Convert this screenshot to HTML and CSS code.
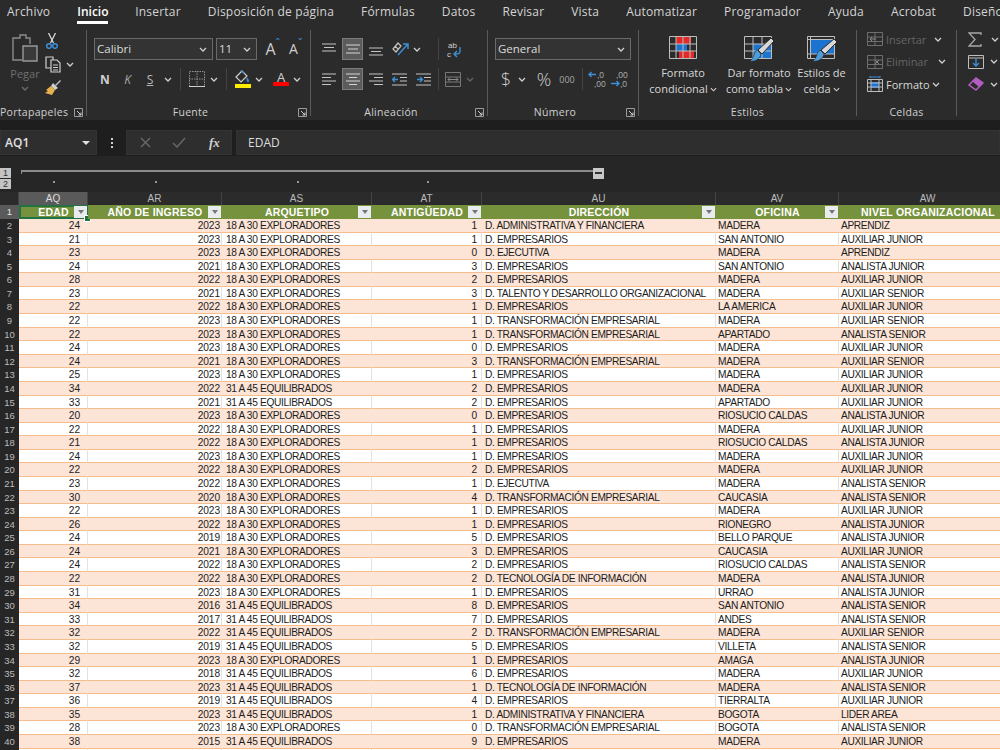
FILE: index.html
```html
<!DOCTYPE html>
<html lang="es">
<head>
<meta charset="utf-8">
<title>Excel</title>
<link rel="stylesheet" href="styles.css">
</head>
<body>
<svg class="defs" width="0" height="0">
  <symbol id="chev" viewBox="0 0 8 5"><path d="M1 1l3 3 3-3" fill="none" stroke="#cfcfcf" stroke-width="1.3"/></symbol>
  <symbol id="launch" viewBox="0 0 9 9"><path d="M.5 8.5V.5h8v8z" fill="none" stroke="#9a9a9a"/><path d="M3 3l4 4M7 4.5V7H4.5" fill="none" stroke="#d0d0d0"/></symbol>
</svg>
<nav class="tabs">
  <span>Archivo</span><span class="on">Inicio</span><span>Insertar</span><span>Disposición de página</span><span>Fórmulas</span><span>Datos</span><span>Revisar</span><span>Vista</span><span>Automatizar</span><span>Programador</span><span>Ayuda</span><span>Acrobat</span><span>Diseño</span>
</nav>
<section class="ribbon">
  <div class="group g-clip">
    <div class="body clip">
      <div class="paste">
        <svg width="28" height="31" viewBox="0 0 28 31"><path d="M5 5h4V2h6v3h4v6M11 27H2V5h3" fill="none" stroke="#8c8c8c" stroke-width="1.400"/><path d="M12 13h14v15H12z" fill="#3a3a3a" stroke="#999" stroke-width="1.400"/></svg>
        <span class="pg">Pegar</span>
        <svg class="c" width="8" height="5"><use href="#chev"/></svg>
      </div>
      <div class="clip-side">
        <svg width="14" height="16" viewBox="0 0 14 16"><path d="M3.500 0l5 10M10.500 0l-5 10" stroke="#d8d8d8" stroke-width="1.300"/><circle cx="4" cy="13" r="2.300" fill="none" stroke="#3d8fd6" stroke-width="1.500"/><circle cx="10" cy="13" r="2.300" fill="none" stroke="#3d8fd6" stroke-width="1.500"/></svg>
        <div class="line">
          <svg width="16" height="17" viewBox="0 0 16 17"><path d="M6 12H1V1h7v3" fill="none" stroke="#cfcfcf" stroke-width="1.200"/><path d="M6 4h6l3 3v9H6z" fill="#2b2b2b" stroke="#cfcfcf" stroke-width="1.200"/><path d="M8 9h5M8 11.500h5M8 14h5" stroke="#cfcfcf"/></svg>
          <svg class="c" width="8" height="5"><use href="#chev"/></svg>
        </div>
        <svg width="16" height="16" viewBox="0 0 16 16"><path d="M10 5l5-5 1 1-5 5z" fill="#bdbdbd"/><path d="M8 3l5 5-3 2-4-4z" fill="#cfcfcf"/><path d="M6 6l4 4-3 5-7-2 3-2-2-1z" fill="#e7b24c"/></svg>
      </div>
    </div>
    <div class="foot start">Portapapeles<svg class="launch" width="9" height="9"><use href="#launch"/></svg></div>
  </div>

  <div class="group g-font">
    <div class="body stack">
      <div class="row">
        <div class="sel w119"><span class="val">Calibri</span><svg width="8" height="5"><use href="#chev"/></svg></div>
        <div class="sel w41"><span class="val">11</span><svg width="8" height="5"><use href="#chev"/></svg></div>
        <span class="bigA w25">A<sup class="up">ˆ</sup></span>
        <span class="bigA small w25">A<sup class="dn">ˇ</sup></span>
      </div>
      <div class="row">
        <span class="b w22 fb">N</span><span class="b w23 fi">K</span><span class="b w22 fu">S</span>
        <span class="b w14"><svg width="8" height="5"><use href="#chev"/></svg></span>
        <i class="sep m5"></i>
        <span class="b w21"><svg width="16" height="16" viewBox="0 0 16 16"><path d="M.5.500h15v15H.5z" fill="none" stroke="#8f8f8f" stroke-dasharray="1.500 1"/><path d="M8 0v16M0 8h16" stroke="#8f8f8f" stroke-dasharray="1.500 1"/><path d="M0 15.500h16" stroke="#d0d0d0"/></svg></span>
        <span class="b w14"><svg width="8" height="5"><use href="#chev"/></svg></span>
        <i class="sep m5"></i>
        <span class="b w21"><svg width="16" height="18" viewBox="0 0 16 18"><path d="M7 1L1 7l5 5 6-6z" fill="none" stroke="#d0d0d0" stroke-width="1.200"/><path d="M12 8c2 2 2 4 1 4s-1-2-1-4zM5 1l5 2" fill="#3d8fd6" stroke="#3d8fd6"/><rect y="14" width="16" height="4" fill="#ffeb00"/></svg></span>
        <span class="b w12"><svg width="8" height="5"><use href="#chev"/></svg></span>
        <span class="b w24 m4l fcol">A</span>
        <span class="b w8"><svg width="8" height="5"><use href="#chev"/></svg></span>
      </div>
    </div>
    <div class="foot pr16">Fuente<svg class="launch" width="9" height="9"><use href="#launch"/></svg></div>
  </div>

  <div class="group g-align">
    <div class="body stack">
      <div class="row">
        <span class="b w22"><svg width="14" height="12" viewBox="0 0 14 12"><path d="M0 1h14M2 4.500h10M0 8h14" stroke="#c4c4c4" stroke-width="1.200"/></svg></span>
        <span class="b w21 act m2l"><svg width="14" height="12" viewBox="0 0 14 12"><path d="M0 2h14M2 6h10M0 10h14" stroke="#d4d4d4" stroke-width="1.200"/></svg></span>
        <span class="b w22 m2l"><svg width="14" height="14" viewBox="0 0 14 14"><path d="M0 6h14M2 9.500h10M0 13h14" stroke="#c4c4c4" stroke-width="1.200"/></svg></span>
        <span class="b w23 m2l"><svg width="17" height="16" viewBox="0 0 17 16"><path d="M1 8l5-6 3 3-5 6zM3 5l3 3" fill="none" stroke="#c4c4c4" stroke-width="1.200"/><path d="M6 14L15 4M11 3h5v5" fill="none" stroke="#3d8fd6" stroke-width="1.500"/></svg></span>
        <span class="b w10"><svg width="8" height="5"><use href="#chev"/></svg></span>
        <i class="sep m16l m7r"></i>
        <span class="b w16"><svg width="16" height="19" viewBox="0 0 16 19"><text class="ab" x="2" y="7.500">ab</text><text class="ab" x="1" y="16.500">c</text><path d="M14 7v4c0 3-2 3-5 3M11 11l-3 3 3 3" fill="none" stroke="#3d8fd6" stroke-width="1.400"/></svg></span>
      </div>
      <div class="row">
        <span class="b w22"><svg width="14" height="13" viewBox="0 0 14 13"><path d="M0 1h14M0 4.500h9M0 8h14M0 11.500h9" stroke="#c4c4c4" stroke-width="1.200"/></svg></span>
        <span class="b w21 act m2l"><svg width="14" height="13" viewBox="0 0 14 13"><path d="M0 1h14M3 4.500h8M0 8h14M3 11.500h8" stroke="#d4d4d4" stroke-width="1.200"/></svg></span>
        <span class="b w22 m2l"><svg width="14" height="13" viewBox="0 0 14 13"><path d="M0 1h14M5 4.500h9M0 8h14M5 11.500h9" stroke="#c4c4c4" stroke-width="1.200"/></svg></span>
        <span class="b w22 m1l"><svg width="15" height="13" viewBox="0 0 15 13"><path d="M0 1h15M0 12h15M8 4.500h7M8 8h7" stroke="#c4c4c4" stroke-width="1.200"/><path d="M6 6.500H1M3 4L.5 6.500 3 9" fill="none" stroke="#3d8fd6" stroke-width="1.400"/></svg></span>
        <span class="b w22 m2l"><svg width="15" height="13" viewBox="0 0 15 13"><path d="M0 1h15M0 12h15M8 4.500h7M8 8h7" stroke="#c4c4c4" stroke-width="1.200"/><path d="M1 6.500h5M4 4l2.500 2.500L4 9" fill="none" stroke="#3d8fd6" stroke-width="1.400"/></svg></span>
        <i class="sep m4l m5r"></i>
        <span class="b w18"><svg width="16" height="15" viewBox="0 0 16 15"><path d="M.5.500h15v14H.5zM0 5h16M0 10h16" fill="none" stroke="#777"/><path d="M3 7.500h10M5 5.500l-2 2 2 2M11 5.500l2 2-2 2" fill="none" stroke="#8a8a8a"/></svg></span>
        <span class="b w16 dim"><svg width="8" height="5"><use href="#chev"/></svg></span>
      </div>
    </div>
    <div class="foot pr16">Alineación<svg class="launch" width="9" height="9"><use href="#launch"/></svg></div>
  </div>

  <div class="group g-num">
    <div class="body stack">
      <div class="row"><div class="sel w136"><span class="val">General</span><svg width="8" height="5"><use href="#chev"/></svg></div></div>
      <div class="row">
        <span class="b w22 cur">$</span>
        <span class="b w10"><svg width="8" height="5"><use href="#chev"/></svg></span>
        <span class="b w22 m6l pct">%</span>
        <span class="b w24 th">000</span>
        <i class="sep m3l m4r"></i>
        <span class="b w20"><svg width="18" height="18" viewBox="0 0 18 18"><text class="dec" x="9" y="7.500">,0</text><text class="dec" x="6" y="17">,00</text><path d="M8 4.500H1M3.500 2L1 4.500 3.500 7" fill="none" stroke="#3d8fd6" stroke-width="1.400"/></svg></span>
        <span class="b w20 m3l"><svg width="18" height="18" viewBox="0 0 18 18"><text class="dec" x="5" y="7.500">,00</text><text class="dec" x="9" y="17">,0</text><path d="M0 13.500h8M5.500 11L8 13.500 5.500 16" fill="none" stroke="#3d8fd6" stroke-width="1.400"/></svg></span>
      </div>
    </div>
    <div class="foot pr16">Número<svg class="launch" width="9" height="9"><use href="#launch"/></svg></div>
  </div>

  <div class="group g-sty">
    <div class="body big-row">
      <div class="big w70 m9l">
        <svg width="28" height="26" viewBox="0 0 28 26"><path d="M7 1h15v7H7zM10 15h15v7H10z" fill="#e32a2a"/><path d="M7 8h11v7H7z" fill="#1b74d0"/><path d="M.5.500h27v22H.5zM0 8h28M0 15h28M7 0v23M14 0v23M21 0v23" fill="none" stroke="#bdbdbd"/></svg>
        <span class="cap">Formato</span>
        <span class="cap">condicional <svg width="7" height="5"><use href="#chev"/></svg></span>
      </div>
      <div class="big w72 m5l">
        <svg width="30" height="26" viewBox="0 0 30 26"><path d="M9 8h19v15H9z" fill="#1b74d0"/><path d="M.5.500h27v22H.5zM0 8h28M0 15h28M9 0v23M18 0v23" fill="none" stroke="#bdbdbd"/><path d="M27 2l3 3-12 13-4-4z" fill="#d8d8d8" stroke="#2b2b2b"/><path d="M13 14l4 4c-1 5-6 8-11 7 4-2 3-8 7-11z" fill="#4b9ddc" stroke="#2b2b2b" stroke-width=".6"/></svg>
        <span class="cap">Dar formato</span>
        <span class="cap">como tabla <svg width="7" height="5"><use href="#chev"/></svg></span>
      </div>
      <div class="big w53">
        <svg width="30" height="26" viewBox="0 0 30 26"><path d="M4 4h24v14H4z" fill="#1b74d0"/><path d="M.5.500h27v22H.5zM3.500 0v23M0 3.500h28M0 18h28" fill="none" stroke="#bdbdbd"/><path d="M27 3l3 3-12 12-4-4z" fill="#d8d8d8" stroke="#2b2b2b"/><path d="M13 14l4 4c-1 5-6 8-11 7 4-2 3-8 7-11z" fill="#4b9ddc" stroke="#2b2b2b" stroke-width=".6"/></svg>
        <span class="cap">Estilos de</span>
        <span class="cap">celda <svg width="7" height="5"><use href="#chev"/></svg></span>
      </div>
    </div>
    <div class="foot">Estilos</div>
  </div>

  <div class="group g-cel">
    <div class="body lines">
      <div class="ln dimt"><svg width="16" height="14" viewBox="0 0 16 14"><path d="M.5.500h15v13H.5zM0 5h16M0 9.500h16M8 0v14" fill="none" stroke="#6e6e6e"/><path d="M9 7H3M5 5L3 7l2 2" fill="none" stroke="#8a8a8a"/></svg><span>Insertar</span><svg class="c1" width="8" height="5"><use href="#chev"/></svg></div>
      <div class="ln dimt"><svg width="16" height="14" viewBox="0 0 16 14"><path d="M.5.500h15v13H.5zM0 5h16M0 9.500h16M8 0v14" fill="none" stroke="#6e6e6e"/><path d="M8 5l4 4M12 5L8 9" stroke="#8a8a8a"/></svg><span>Eliminar</span><svg class="c2" width="8" height="5"><use href="#chev"/></svg></div>
      <div class="ln"><svg width="16" height="16" viewBox="0 0 16 16"><path d="M4 6h8v6H4z" fill="#1b74d0"/><path d="M.5 3.500h15v12H.5zM0 7h16M0 11h16M4 3v13M12 3v13" fill="none" stroke="#bdbdbd"/><path d="M3 1h10M3 0v2M13 0v2" stroke="#3d8fd6"/></svg><span>Formato</span><svg class="c3" width="8" height="5"><use href="#chev"/></svg></div>
    </div>
    <div class="foot">Celdas</div>
  </div>

  <div class="group g-edit">
    <div class="body lines">
      <div class="ln"><svg width="14" height="15" viewBox="0 0 14 15"><path d="M13 3V1H1l6 6.500L1 14h12v-2" fill="none" stroke="#a8a8a8" stroke-width="1.300"/></svg><svg class="e1" width="8" height="5"><use href="#chev"/></svg></div>
      <div class="ln"><svg width="16" height="14" viewBox="0 0 16 14"><path d="M.5.500h15v13H.5z" fill="none" stroke="#bdbdbd"/><path d="M0 3h16" stroke="#bdbdbd"/><path d="M8 4v7M5 8l3 3 3-3" fill="none" stroke="#3d8fd6" stroke-width="1.400"/></svg><svg class="e2" width="8" height="5"><use href="#chev"/></svg></div>
      <div class="ln"><svg width="16" height="14" viewBox="0 0 16 14"><path d="M1 8l7-7 7 5-7 7z" fill="none" stroke="#b35cc4" stroke-width="1.500"/><path d="M8 1l7 5-4 4-7-6z" fill="#b35cc4"/></svg><svg class="e2" width="8" height="5"><use href="#chev"/></svg></div>
    </div>
  </div>
</section>
<div class="gap"></div>
<section class="fbar">
  <div class="name"><span>AQ1</span><i class="tri"></i></div>
  <div class="dots"><i></i><i></i><i></i></div>
  <div class="fx">
    <svg width="11" height="11" viewBox="0 0 11 11"><path d="M1 1l9 9M10 1l-9 9" stroke="#6a6a6a" stroke-width="1.400"/></svg>
    <svg width="14" height="11" viewBox="0 0 14 11"><path d="M1 6l4 4 8-9" fill="none" stroke="#6a6a6a" stroke-width="1.400"/></svg>
    <em>fx</em>
  </div>
  <div class="input">EDAD</div>
</section>
<section class="outline">
  <div class="lv"><span>1</span><span>2</span></div>
  <div class="track">
    <div class="bar"><i class="rule"></i><b class="minus"></b></div>
    <div class="pts"><i class="p1"></i><i class="p2"></i><i class="p3"></i><i class="p4"></i></div>
  </div>
</section>
<table class="sheet">
<thead>
<tr class="cols"><th class="corner"></th><th class="s">AQ</th><th>AR</th><th>AS</th><th>AT</th><th>AU</th><th>AV</th><th>AW</th></tr>
</thead>
<tbody>
<tr class="head"><th class="s">1</th><th class="cur-cell">EDAD<i class="f"></i></th><th>AÑO DE INGRESO<i class="f"></i></th><th>ARQUETIPO<i class="f"></i></th><th>ANTIGÜEDAD<i class="f"></i></th><th>DIRECCIÓN<i class="f"></i></th><th>OFICINA<i class="f"></i></th><th>NIVEL ORGANIZACIONAL<i class="f"></i></th></tr>
<tr><th>2</th><td>24</td><td>2023</td><td>18 A 30 EXPLORADORES</td><td>1</td><td>D. ADMINISTRATIVA Y FINANCIERA</td><td>MADERA</td><td>APRENDIZ</td></tr>
<tr><th>3</th><td>21</td><td>2023</td><td>18 A 30 EXPLORADORES</td><td>1</td><td>D. EMPRESARIOS</td><td>SAN ANTONIO</td><td>AUXILIAR JUNIOR</td></tr>
<tr><th>4</th><td>23</td><td>2023</td><td>18 A 30 EXPLORADORES</td><td>0</td><td>D. EJECUTIVA</td><td>MADERA</td><td>APRENDIZ</td></tr>
<tr><th>5</th><td>24</td><td>2021</td><td>18 A 30 EXPLORADORES</td><td>3</td><td>D. EMPRESARIOS</td><td>SAN ANTONIO</td><td>ANALISTA JUNIOR</td></tr>
<tr><th>6</th><td>28</td><td>2022</td><td>18 A 30 EXPLORADORES</td><td>2</td><td>D. EMPRESARIOS</td><td>MADERA</td><td>AUXILIAR JUNIOR</td></tr>
<tr><th>7</th><td>23</td><td>2021</td><td>18 A 30 EXPLORADORES</td><td>3</td><td>D. TALENTO Y DESARROLLO ORGANIZACIONAL</td><td>MADERA</td><td>AUXILIAR SENIOR</td></tr>
<tr><th>8</th><td>22</td><td>2022</td><td>18 A 30 EXPLORADORES</td><td>1</td><td>D. EMPRESARIOS</td><td>LA AMERICA</td><td>AUXILIAR JUNIOR</td></tr>
<tr><th>9</th><td>22</td><td>2023</td><td>18 A 30 EXPLORADORES</td><td>1</td><td>D. TRANSFORMACIÓN EMPRESARIAL</td><td>MADERA</td><td>AUXILIAR SENIOR</td></tr>
<tr><th>10</th><td>22</td><td>2023</td><td>18 A 30 EXPLORADORES</td><td>1</td><td>D. TRANSFORMACIÓN EMPRESARIAL</td><td>APARTADO</td><td>ANALISTA SENIOR</td></tr>
<tr><th>11</th><td>24</td><td>2023</td><td>18 A 30 EXPLORADORES</td><td>0</td><td>D. EMPRESARIOS</td><td>MADERA</td><td>AUXILIAR JUNIOR</td></tr>
<tr><th>12</th><td>24</td><td>2021</td><td>18 A 30 EXPLORADORES</td><td>3</td><td>D. TRANSFORMACIÓN EMPRESARIAL</td><td>MADERA</td><td>AUXILIAR SENIOR</td></tr>
<tr><th>13</th><td>25</td><td>2023</td><td>18 A 30 EXPLORADORES</td><td>1</td><td>D. EMPRESARIOS</td><td>MADERA</td><td>AUXILIAR JUNIOR</td></tr>
<tr><th>14</th><td>34</td><td>2022</td><td>31 A 45 EQUILIBRADOS</td><td>2</td><td>D. EMPRESARIOS</td><td>MADERA</td><td>AUXILIAR JUNIOR</td></tr>
<tr><th>15</th><td>33</td><td>2021</td><td>31 A 45 EQUILIBRADOS</td><td>2</td><td>D. EMPRESARIOS</td><td>APARTADO</td><td>AUXILIAR JUNIOR</td></tr>
<tr><th>16</th><td>20</td><td>2023</td><td>18 A 30 EXPLORADORES</td><td>0</td><td>D. EMPRESARIOS</td><td>RIOSUCIO CALDAS</td><td>ANALISTA JUNIOR</td></tr>
<tr><th>17</th><td>22</td><td>2022</td><td>18 A 30 EXPLORADORES</td><td>1</td><td>D. EMPRESARIOS</td><td>MADERA</td><td>AUXILIAR JUNIOR</td></tr>
<tr><th>18</th><td>21</td><td>2022</td><td>18 A 30 EXPLORADORES</td><td>1</td><td>D. EMPRESARIOS</td><td>RIOSUCIO CALDAS</td><td>ANALISTA JUNIOR</td></tr>
<tr><th>19</th><td>24</td><td>2023</td><td>18 A 30 EXPLORADORES</td><td>1</td><td>D. EMPRESARIOS</td><td>MADERA</td><td>AUXILIAR JUNIOR</td></tr>
<tr><th>20</th><td>22</td><td>2022</td><td>18 A 30 EXPLORADORES</td><td>2</td><td>D. EMPRESARIOS</td><td>MADERA</td><td>AUXILIAR JUNIOR</td></tr>
<tr><th>21</th><td>23</td><td>2022</td><td>18 A 30 EXPLORADORES</td><td>1</td><td>D. EJECUTIVA</td><td>MADERA</td><td>ANALISTA SENIOR</td></tr>
<tr><th>22</th><td>30</td><td>2020</td><td>18 A 30 EXPLORADORES</td><td>4</td><td>D. TRANSFORMACIÓN EMPRESARIAL</td><td>CAUCASIA</td><td>ANALISTA SENIOR</td></tr>
<tr><th>23</th><td>22</td><td>2023</td><td>18 A 30 EXPLORADORES</td><td>1</td><td>D. EMPRESARIOS</td><td>MADERA</td><td>AUXILIAR JUNIOR</td></tr>
<tr><th>24</th><td>26</td><td>2022</td><td>18 A 30 EXPLORADORES</td><td>1</td><td>D. EMPRESARIOS</td><td>RIONEGRO</td><td>ANALISTA JUNIOR</td></tr>
<tr><th>25</th><td>24</td><td>2019</td><td>18 A 30 EXPLORADORES</td><td>5</td><td>D. EMPRESARIOS</td><td>BELLO PARQUE</td><td>ANALISTA JUNIOR</td></tr>
<tr><th>26</th><td>24</td><td>2021</td><td>18 A 30 EXPLORADORES</td><td>3</td><td>D. EMPRESARIOS</td><td>CAUCASIA</td><td>AUXILIAR JUNIOR</td></tr>
<tr><th>27</th><td>24</td><td>2022</td><td>18 A 30 EXPLORADORES</td><td>2</td><td>D. EMPRESARIOS</td><td>RIOSUCIO CALDAS</td><td>ANALISTA SENIOR</td></tr>
<tr><th>28</th><td>22</td><td>2022</td><td>18 A 30 EXPLORADORES</td><td>2</td><td>D. TECNOLOGÍA DE INFORMACIÓN</td><td>MADERA</td><td>ANALISTA JUNIOR</td></tr>
<tr><th>29</th><td>31</td><td>2023</td><td>18 A 30 EXPLORADORES</td><td>1</td><td>D. EMPRESARIOS</td><td>URRAO</td><td>ANALISTA JUNIOR</td></tr>
<tr><th>30</th><td>34</td><td>2016</td><td>31 A 45 EQUILIBRADOS</td><td>8</td><td>D. EMPRESARIOS</td><td>SAN ANTONIO</td><td>ANALISTA SENIOR</td></tr>
<tr><th>31</th><td>33</td><td>2017</td><td>31 A 45 EQUILIBRADOS</td><td>7</td><td>D. EMPRESARIOS</td><td>ANDES</td><td>ANALISTA SENIOR</td></tr>
<tr><th>32</th><td>32</td><td>2022</td><td>31 A 45 EQUILIBRADOS</td><td>2</td><td>D. TRANSFORMACIÓN EMPRESARIAL</td><td>MADERA</td><td>AUXILIAR SENIOR</td></tr>
<tr><th>33</th><td>32</td><td>2019</td><td>31 A 45 EQUILIBRADOS</td><td>5</td><td>D. EMPRESARIOS</td><td>VILLETA</td><td>ANALISTA SENIOR</td></tr>
<tr><th>34</th><td>29</td><td>2023</td><td>18 A 30 EXPLORADORES</td><td>1</td><td>D. EMPRESARIOS</td><td>AMAGA</td><td>ANALISTA JUNIOR</td></tr>
<tr><th>35</th><td>32</td><td>2018</td><td>31 A 45 EQUILIBRADOS</td><td>6</td><td>D. EMPRESARIOS</td><td>MADERA</td><td>AUXILIAR JUNIOR</td></tr>
<tr><th>36</th><td>37</td><td>2023</td><td>31 A 45 EQUILIBRADOS</td><td>1</td><td>D. TECNOLOGÍA DE INFORMACIÓN</td><td>MADERA</td><td>ANALISTA SENIOR</td></tr>
<tr><th>37</th><td>36</td><td>2019</td><td>31 A 45 EQUILIBRADOS</td><td>4</td><td>D. EMPRESARIOS</td><td>TIERRALTA</td><td>AUXILIAR JUNIOR</td></tr>
<tr><th>38</th><td>35</td><td>2023</td><td>31 A 45 EQUILIBRADOS</td><td>1</td><td>D. ADMINISTRATIVA Y FINANCIERA</td><td>BOGOTA</td><td>LIDER AREA</td></tr>
<tr><th>39</th><td>28</td><td>2023</td><td>18 A 30 EXPLORADORES</td><td>0</td><td>D. TRANSFORMACIÓN EMPRESARIAL</td><td>BOGOTA</td><td>ANALISTA SENIOR</td></tr>
<tr><th>40</th><td>38</td><td>2015</td><td>31 A 45 EQUILIBRADOS</td><td>9</td><td>D. EMPRESARIOS</td><td>MADERA</td><td>AUXILIAR JUNIOR</td></tr>
<tr><th></th><td></td><td></td><td></td><td></td><td></td><td></td><td></td></tr>
</tbody>
</table>
</body>
</html>
```

FILE: styles.css
```css
*{box-sizing:border-box}
html,body{margin:0;height:750px;overflow:hidden}
body{background:#262626;color:#d8d8d8;font-family:"Open Sans","Noto Sans",sans-serif;font-size:12px;width:1000px}
.defs{position:absolute}
svg{display:block;flex:none}

/* tabs */
.tabs{display:flex;gap:27px;height:30px;padding-left:7px;background:#2b2b2b;white-space:nowrap;font-size:12px;line-height:24px;letter-spacing:.2px;color:#d4d4d4}
.tabs span{height:24px}
.tabs .on{color:#fff;font-weight:600;width:31px;letter-spacing:0;border-bottom:3px solid #fff;line-height:24px}

/* ribbon */
.ribbon{display:flex;height:90px;background:#2b2b2b;align-items:flex-start}
.group{height:86px;display:flex;flex-direction:column;border-right:1px solid #5a5a5a;flex:none}
.g-clip{width:87px}.g-font{width:224px}.g-align{width:177px}.g-num{width:151px}.g-sty{width:218px}.g-cel{width:100px}.g-edit{border:0;flex:1}
.body{height:74px;flex:none}
.foot{height:16px;margin-bottom:-4px;font-size:10.500px;line-height:16px;letter-spacing:.3px;color:#d0d0d0;display:flex;justify-content:center;position:relative}
.foot.start{justify-content:flex-start}
.foot.pr16{padding-right:16px}
.launch{position:absolute;right:3px;top:4px}

.clip{display:flex;padding:3px 0 0 10px}
.paste{width:30px;display:flex;flex-direction:column;align-items:center;color:#6f6f6f}
.pg{font-size:11px;line-height:14px;margin-top:3px}
.paste .c{margin-top:5px;opacity:.4}
.clip-side{margin-left:5px;display:flex;flex-direction:column;gap:7px}
.line{display:flex;align-items:center;gap:5px}

.stack{display:flex;flex-direction:column;gap:8px;padding:8px 0 0 7px}
.row{display:flex;align-items:center;height:22px}
.sel{height:22px;border:1px solid #6a6a6a;background:#333;display:flex;align-items:center;justify-content:space-between;padding:0 5px 0 2px;font-size:11.500px;color:#dcdcdc;flex:none}
.w119{width:119px;margin-right:3px}.w41{width:41px;margin-right:1px}.w136{width:136px}
.val{line-height:20px}
.b{height:22px;display:flex;align-items:center;justify-content:center;flex:none}
.w8{width:8px}.w10{width:10px}.w12{width:12px}.w14{width:14px}.w16{width:16px}.w18{width:18px}.w20{width:20px}.w21{width:21px}.w22{width:22px}.w23{width:23px}.w24{width:24px}.w25{width:25px}
.w53{width:53px}.w70{width:70px}.w72{width:72px}
.m1l{margin-left:1px}.m2l{margin-left:2px}.m3l{margin-left:3px}.m4l{margin-left:4px}.m4r{margin-right:4px}.m5l{margin-left:5px}.m5r{margin-right:5px}.m6l{margin-left:6px}.m7r{margin-right:7px}.m9l{margin-left:9px}.m16l{margin-left:16px}
.m5{margin:0 5px}
.sep{display:block;width:1px;height:22px;background:#444;flex:none}
.act{background:#5c5c5c;border:1px solid #7c7c7c}
.dim{opacity:.35}
.bigA{font-size:16px;line-height:22px;height:22px;color:#cfcfcf;text-align:center;flex:none;position:relative}
.bigA.small{font-size:14px;margin-left:-2px}
.bigA sup{position:absolute;top:-1px;font-size:11px;line-height:11px;color:#3d8fd6}
.fb{font-weight:700;color:#cfcfcf;font-size:12px}
.fi{font-style:italic;color:#a8a8a8;font-size:12px}
.fu{color:#b8b8b8;text-decoration:underline;font-size:12px}
.fcol{font-size:13px;color:#cfcfcf;border-bottom:4px solid transparent;line-height:16px;background:linear-gradient(#ff0000,#ff0000) center bottom/16px 4px no-repeat}
.ab{font:8px "Liberation Sans",sans-serif;fill:#cfcfcf}
.dec{font:8.500px "Liberation Sans",sans-serif;fill:#a8a8a8}
.cur{font-size:18px;font-weight:300;color:#cfcfcf}
.pct{font-size:18px;font-weight:300;color:#cfcfcf}
.th{font-size:9px;color:#a8a8a8}

.big-row{display:flex;padding-top:6px}
.big{display:flex;flex-direction:column;align-items:center;flex:none}
.big>svg:first-child{margin-bottom:3px}
.cap{display:flex;align-items:center;gap:2px;font-size:11px;line-height:16px;color:#d8d8d8;white-space:nowrap}

.lines{display:flex;flex-direction:column;height:76px;margin-top:-2px;padding-left:10px}
.ln{height:22.500px;display:flex;align-items:center;gap:3px;font-size:11px;color:#d8d8d8}
.dimt{color:#656565}
.c1{margin-left:5px}.c2{margin-left:7px}.c3{margin-left:-1px}
.g-edit .lines{padding-left:11px}
.e1{margin-left:6px}.e2{margin-left:3px}

.gap{height:10px;background:#1e1e1e}

/* formula bar */
.fbar{display:flex;height:26px;background:#1e1e1e;padding-bottom:1px}
.name{width:97px;background:#2e2e2e;border:1px solid #333;display:flex;align-items:center;justify-content:space-between;padding:0 6px 0 4px;font-size:12px;color:#e0e0e0;font-weight:600}
.tri{border:4px solid transparent;border-top:4px solid #e0e0e0;border-bottom:0}
.dots{width:29px;display:flex;flex-direction:column;align-items:center;justify-content:center;gap:2px}
.dots i{width:2px;height:2px;background:#d0d0d0}
.fx{width:106px;margin-right:4px;background:#2e2e2e;border:1px solid #333;display:flex;align-items:center;gap:21px;padding:0 10px 0 13px}
.fx em{font-family:"Liberation Serif",serif;font-weight:700;font-size:13px;color:#d0d0d0;margin-left:2px}
.input{flex:1;background:#2e2e2e;border:1px solid #333;line-height:24px;padding-left:11px;font-size:12px;font-weight:500;color:#dcdcdc}

/* outline */
.outline{display:flex;height:36px;background:#262626;padding-top:12px}
.lv{width:11px;display:flex;flex-direction:column;gap:1px}
.lv span{height:10px;background:#c4c4c4;color:#333;font:9px/10px "Liberation Sans",sans-serif;text-align:center;display:block}
.track{flex:1;padding-left:10px;display:flex;flex-direction:column}
.bar{height:10px;display:flex;align-items:center;width:583px}
.rule{height:2px;flex:1;background:#8c8c8c;margin-top:-4px;display:block;position:relative}
.rule::before{content:"";position:absolute;left:0;top:0;width:1px;height:4px;background:#8c8c8c}
.minus{width:11px;height:11px;background:#c8c8c8;display:flex;align-items:center;justify-content:center;flex:none}
.minus::before{content:"";width:7px;height:2px;background:#333}
.pts{height:12px;position:relative}
.pts i{position:absolute;top:3px;width:2px;height:2px;background:#9a9a9a}
.p1{left:32px}.p2{left:134px}.p3{left:276px}.p4{left:406px}

/* sheet */
.sheet{display:grid;grid-template-columns:19px 69px 134px 150px 110px 234px 123px 178px;grid-template-rows:13px 14px;grid-auto-rows:13.580px;width:1017px;border-collapse:separate;border-spacing:0;font-family:"Liberation Sans",sans-serif}
.sheet thead,.sheet tbody,.sheet tr{display:contents}
.sheet th{padding:0;overflow:hidden;white-space:nowrap;font-weight:400}
.sheet td{padding:0 3px;overflow:hidden;white-space:nowrap;font-weight:400;color:#1c1c1c;font-size:10.200px;line-height:13px;background:#fff;border-bottom:1px solid #f5bc8c;border-right:1px solid #e2e2e2;letter-spacing:-.1px}
.cols th{background:#2b2b2b;color:#bdbdbd;font-size:10px;line-height:13px;border-right:1px solid #444;text-align:center}
.cols th.s{background:#5a5a5a;color:#dcdcdc}
tbody th:first-child{background:#262626;color:#bdbdbd;font-size:9.500px;line-height:13px;text-align:center}
.sheet tr:nth-child(even) td{background:#fce4d6;border-right-color:#fce4d6}
.sheet td:nth-child(2){text-align:right;padding-right:7px}
.sheet td:nth-child(3){text-align:right;padding-right:1px}
.sheet td:nth-child(4){letter-spacing:-.36px;padding-left:4px}
.sheet td:nth-child(5){text-align:right;padding-right:4px}
.sheet td:nth-child(6){letter-spacing:-.36px}
.sheet td:nth-child(7){letter-spacing:-.32px;padding-left:2px}
.sheet td:nth-child(8){letter-spacing:-.36px;padding-left:2px}
.head th{background:#76923c;color:#fff;font-weight:700;font-size:10.500px;line-height:14px;text-align:center;position:relative;letter-spacing:.2px}
tbody .head th.s{background:#5a5a5a;color:#e4e4e4;font-size:9.500px;line-height:14px;font-weight:400;letter-spacing:0}
.head .cur-cell{outline:2px solid #217346;outline-offset:-2px;overflow:visible}
.cur-cell::after{content:"";position:absolute;right:-3px;bottom:-3px;width:5px;height:5px;background:#217346;border:1px solid #fff}
.f{position:absolute;right:1px;top:1px;width:13px;height:12px;background:#e9ecef;display:flex;align-items:center;justify-content:center}
.f::before{content:"";border:3.500px solid transparent;border-top:4px solid #777;border-bottom:0}
```
